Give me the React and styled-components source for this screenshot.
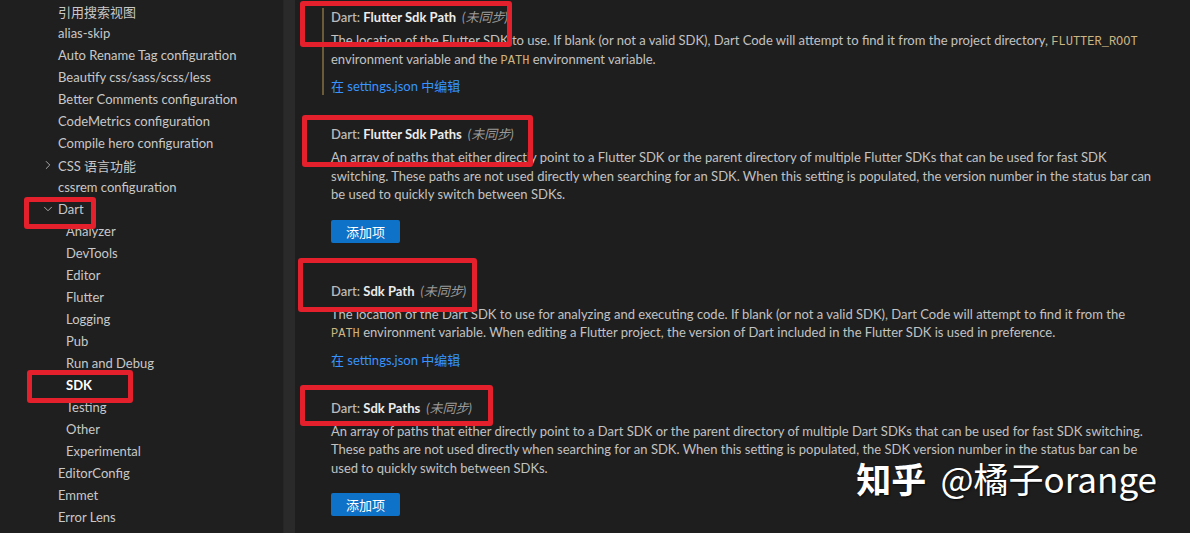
import React from 'react'
import styled, {createGlobalStyle} from 'styled-components'
import {ChevronRight, ChevronDown} from 'lucide-react'

const GlobalStyle = createGlobalStyle`
  html, body {
    margin: 0;
    padding: 0;
    background: #1e1e1e;
  }
  body {
    font-family: Lato, "Noto Sans CJK SC", sans-serif;
    font-size: 13px;
    color: #cccccc;
  }
`

const Page = styled.div`
  position: relative;
  display: flex;
  width: 1190px;
  height: 533px;
  overflow: hidden;
  background: #1e1e1e;
`

const Sidebar = styled.div`
  width: 283px;
  flex-shrink: 0;
  background: #1f1f1f;
`

const Sash = styled.div`
  width: 11px;
  flex-shrink: 0;
  background: #2a2a2a;
  border-left: 1px solid #262626;
`

const TreeRow = styled.div`
  display: flex;
  align-items: center;
  height: 22px;
  padding-left: ${p => p.$indent}px;
  color: ${p => (p.$active ? '#ffffff' : '#c8c8c8')};
  font-weight: ${p => (p.$active ? 700 : 400)};
  white-space: nowrap;
`

const Twistie = styled.span`
  display: flex;
  justify-content: center;
  width: 15px;
  margin-right: 3px;
  color: #c5c5c5;
`

const Main = styled.div`
  flex: 1;
  padding: 8px 0 0 27px;
`

const Setting = styled.div`
  border-left: 2px solid ${p => (p.$modified ? '#6b5b38' : 'transparent')};
  padding-left: 7px;
  margin-bottom: ${p => p.$gap}px;
`

const Title = styled.div`
  height: 18px;
  line-height: 18px;
  white-space: nowrap;
  color: #b9b9b9;
  font-weight: 600;
`

const Name = styled.span`
  color: #ececec;
  font-weight: 700;
`

const Sync = styled.span`
  margin-left: 6px;
  color: #9a9a9a;
  font-style: italic;
  font-weight: 400;
`

const Desc = styled.div`
  margin-top: 5px;
  white-space: nowrap;
  color: #c2c2c2;
`

const Line = styled.div`
  height: 18.5px;
  line-height: 18.5px;
`

const Code = styled.span`
  font-family: "Liberation Mono", monospace;
  font-size: 12px;
  line-height: 1;
  color: #cdb583;
`

const EditLink = styled.div`
  margin-top: 9px;
  height: 18px;
  line-height: 18px;
  color: #3794ff;
`

const AddButton = styled.button`
  display: block;
  margin-top: 16px;
  width: 69px;
  height: 23px;
  padding: 0;
  border: none;
  border-radius: 2px;
  background: #0e72c8;
  color: #ffffff;
  font-family: inherit;
  font-size: 13px;
`

const Mark = styled.div`
  position: absolute;
  left: ${p => p.$x}px;
  top: ${p => p.$y}px;
  width: ${p => p.$w}px;
  height: ${p => p.$h}px;
  box-sizing: border-box;
  border: 5px solid #e3202b;
  border-radius: 3px;
`

const Watermark = styled.div`
  position: absolute;
  right: 33px;
  top: 454px;
  display: flex;
  gap: 14px;
  color: #ffffff;
  font-family: "Noto Sans CJK SC", sans-serif;
  font-size: 35px;
  line-height: 48px;
  white-space: nowrap;
  text-shadow: 1px 1px 2px rgba(0, 0, 0, 0.7);
`

const WatermarkBrand = styled.span`
  font-weight: 700;
`

const tree = [
  {label: '引用搜索视图', level: 1},
  {label: 'alias-skip', level: 1},
  {label: 'Auto Rename Tag configuration', level: 1},
  {label: 'Beautify css/sass/scss/less', level: 1},
  {label: 'Better Comments configuration', level: 1},
  {label: 'CodeMetrics configuration', level: 1},
  {label: 'Compile hero configuration', level: 1},
  {label: 'CSS 语言功能', level: 1, twistie: 'closed'},
  {label: 'cssrem configuration', level: 1},
  {label: 'Dart', level: 1, twistie: 'open'},
  {label: 'Analyzer', level: 2},
  {label: 'DevTools', level: 2},
  {label: 'Editor', level: 2},
  {label: 'Flutter', level: 2},
  {label: 'Logging', level: 2},
  {label: 'Pub', level: 2},
  {label: 'Run and Debug', level: 2},
  {label: 'SDK', level: 2, active: true},
  {label: 'Testing', level: 2},
  {label: 'Other', level: 2},
  {label: 'Experimental', level: 2},
  {label: 'EditorConfig', level: 1},
  {label: 'Emmet', level: 1},
  {label: 'Error Lens', level: 1},
]

const marks = [
  {x: 24, y: 197, w: 72, h: 32},
  {x: 27, y: 370, w: 106, h: 33},
  {x: 300, y: 1, w: 212, h: 46},
  {x: 302, y: 115, w: 231, h: 52},
  {x: 298, y: 258, w: 179, h: 54},
  {x: 300, y: 385, w: 193, h: 41},
]

const SettingTitle = ({name}) => (
  <Title>
    Dart: <Name>{name}</Name>
    <Sync>(未同步)</Sync>
  </Title>
)

export default () => {
  return (
    <Page>
      <GlobalStyle/>
      <Sidebar>
        {tree.map(item => (
          <TreeRow key={item.label} $indent={item.level === 1 ? 40 : 48} $active={item.active}>
            <Twistie>
              {item.twistie === 'closed' && <ChevronRight size={14} strokeWidth={1.4}/>}
              {item.twistie === 'open' && <ChevronDown size={14} strokeWidth={1.4}/>}
            </Twistie>
            {item.label}
          </TreeRow>
        ))}
      </Sidebar>
      <Sash/>
      <Main>
        <Setting $modified $gap={30}>
          <SettingTitle name="Flutter Sdk Path"/>
          <Desc>
            <Line>The location of the Flutter SDK to use. If blank (or not a valid SDK), Dart Code will attempt to find it from the project directory, <Code>FLUTTER_ROOT</Code></Line>
            <Line>environment variable and the <Code>PATH</Code> environment variable.</Line>
          </Desc>
          <EditLink>在 settings.json 中编辑</EditLink>
        </Setting>
        <Setting $gap={39}>
          <SettingTitle name="Flutter Sdk Paths"/>
          <Desc>
            <Line>An array of paths that either directly point to a Flutter SDK or the parent directory of multiple Flutter SDKs that can be used for fast SDK</Line>
            <Line>switching. These paths are not used directly when searching for an SDK. When this setting is populated, the version number in the status bar can</Line>
            <Line>be used to quickly switch between SDKs.</Line>
          </Desc>
          <AddButton>添加项</AddButton>
        </Setting>
        <Setting $gap={30}>
          <SettingTitle name="Sdk Path"/>
          <Desc>
            <Line>The location of the Dart SDK to use for analyzing and executing code. If blank (or not a valid SDK), Dart Code will attempt to find it from the</Line>
            <Line><Code>PATH</Code> environment variable. When editing a Flutter project, the version of Dart included in the Flutter SDK is used in preference.</Line>
          </Desc>
          <EditLink>在 settings.json 中编辑</EditLink>
        </Setting>
        <Setting $gap={39}>
          <SettingTitle name="Sdk Paths"/>
          <Desc>
            <Line>An array of paths that either directly point to a Dart SDK or the parent directory of multiple Dart SDKs that can be used for fast SDK switching.</Line>
            <Line>These paths are not used directly when searching for an SDK. When this setting is populated, the SDK version number in the status bar can be</Line>
            <Line>used to quickly switch between SDKs.</Line>
          </Desc>
          <AddButton>添加项</AddButton>
        </Setting>
      </Main>
      {marks.map((m, i) => (
        <Mark key={i} $x={m.x} $y={m.y} $w={m.w} $h={m.h}/>
      ))}
      <Watermark>
        <WatermarkBrand>知乎</WatermarkBrand>
        <span>@橘子orange</span>
      </Watermark>
    </Page>
  )
}
